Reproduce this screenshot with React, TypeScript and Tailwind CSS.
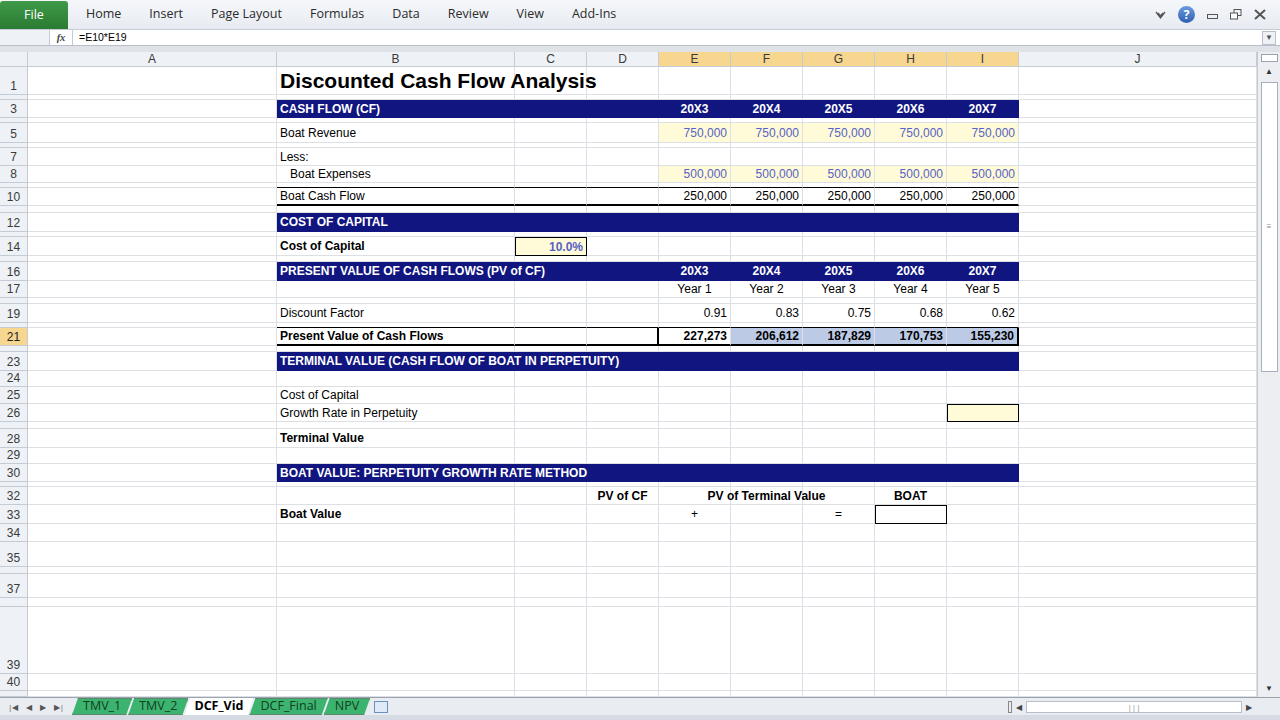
import React from "react";
import { twMerge } from "tailwind-merge";

type Cell = { t?: string; c?: string };
const W = ["w-[249px]", "w-[238px]", "w-[72px]", "w-[72px]", "w-[72px]", "w-[72px]", "w-[72px]", "w-[72px]", "w-[72px]", "w-[238px]"];
const COLS = ["A", "B", "C", "D", "E", "F", "G", "H", "I", "J"];
const NAVY = "bg-[#111580] border-[#111580] text-white font-bold";
const YEL = "bg-[#fffbd9] text-[#5561c4] justify-end";
const R = "justify-end";
const CEN = "justify-center";

type RowDef = { n: number; h: string; label?: boolean; cells?: Record<number, Cell>; sel?: boolean };

const navyRow = (title: string, years = true): Record<number, Cell> => {
  const o: Record<number, Cell> = { 1: { t: title, c: NAVY + " relative z-10" } };
  [2, 3].forEach((i) => (o[i] = { c: NAVY }));
  ["20X3", "20X4", "20X5", "20X6", "20X7"].forEach((y, k) => (o[4 + k] = { t: years ? y : "", c: NAVY + " " + CEN }));
  return o;
};
const vals = (v: string[], c: string) => {
  const o: Record<number, Cell> = {};
  v.forEach((x, k) => (o[4 + k] = { t: x, c }));
  return o;
};
const blackBottom = (): Record<number, Cell> => {
  const o: Record<number, Cell> = {};
  for (let i = 1; i <= 8; i++) o[i] = { c: "border-b-black" };
  return o;
};

const rows: RowDef[] = [
  { n: 1, h: "h-[28px]", label: true, cells: { 1: { t: "Discounted Cash Flow Analysis", c: "text-[21px] leading-[24px] font-bold relative z-10" } } },
  { n: 2, h: "h-[5px]" },
  { n: 3, h: "h-[18px]", label: true, cells: navyRow("CASH FLOW (CF)") },
  { n: 4, h: "h-[5px]" },
  { n: 5, h: "h-[20px]", label: true, cells: { 1: { t: "Boat Revenue" }, ...vals(Array(5).fill("750,000"), YEL) } },
  { n: 6, h: "h-[5px]" },
  { n: 7, h: "h-[18px]", label: true, cells: { 1: { t: "Less:" } } },
  { n: 8, h: "h-[17px]", label: true, cells: { 1: { t: "Boat Expenses", c: "pl-[13px]" }, ...vals(Array(5).fill("500,000"), YEL) } },
  { n: 9, h: "h-[5px]", cells: blackBottom() },
  { n: 10, h: "h-[18px]", label: true, cells: (() => { const o = blackBottom(); for (let i = 1; i <= 8; i++) o[i] = { c: "border-b-black border-b-2" }; o[1].t = "Boat Cash Flow"; for (let i = 4; i <= 8; i++) { o[i].t = "250,000"; o[i].c += " " + R; } return o; })() },
  { n: 11, h: "h-[7px]" },
  { n: 12, h: "h-[19px]", label: true, cells: navyRow("COST OF CAPITAL", false) },
  { n: 13, h: "h-[5px]" },
  { n: 14, h: "h-[19px]", label: true, cells: { 1: { t: "Cost of Capital", c: "font-bold" }, 2: { t: "10.0%", c: "bg-[#fffbd9] text-[#5561c4] font-bold justify-end border border-black" } } },
  { n: 15, h: "h-[6px]" },
  { n: 16, h: "h-[19px]", label: true, cells: navyRow("PRESENT VALUE OF CASH FLOWS (PV of CF)") },
  { n: 17, h: "h-[17px]", label: true, cells: vals(["Year 1", "Year 2", "Year 3", "Year 4", "Year 5"], CEN) },
  { n: 18, h: "h-[6px]" },
  { n: 19, h: "h-[19px]", label: true, cells: { 1: { t: "Discount Factor" }, ...vals(["0.91", "0.83", "0.75", "0.68", "0.62"], R) } },
  { n: 20, h: "h-[5px]", cells: blackBottom() },
  {
    n: 21, h: "h-[18px]", label: true, sel: true,
    cells: {
      1: { t: "Present Value of Cash Flows", c: "font-bold border-b-black border-b-2" },
      2: { c: "border-b-black border-b-2" },
      3: { c: "border-b-black border-b-2 border-r-black border-r-2" },
      4: { t: "227,273", c: "font-bold justify-end border-b-black border-b-2" },
      5: { t: "206,612", c: "font-bold justify-end bg-[#bccae6] border-b-black border-b-2" },
      6: { t: "187,829", c: "font-bold justify-end bg-[#bccae6] border-b-black border-b-2" },
      7: { t: "170,753", c: "font-bold justify-end bg-[#bccae6] border-b-black border-b-2" },
      8: { t: "155,230", c: "font-bold justify-end bg-[#bccae6] border-b-black border-b-2 border-r-black border-r-2" },
    },
  },
  { n: 22, h: "h-[6px]" },
  { n: 23, h: "h-[19px]", label: true, cells: navyRow("TERMINAL VALUE (CASH FLOW OF BOAT IN PERPETUITY)", false) },
  { n: 24, h: "h-[16px]", label: true },
  { n: 25, h: "h-[17px]", label: true, cells: { 1: { t: "Cost of Capital" } } },
  { n: 26, h: "h-[18px]", label: true, cells: { 1: { t: "Growth Rate in Perpetuity" }, 8: { c: "bg-[#fffbd9] border border-black" } } },
  { n: 27, h: "h-[7px]" },
  { n: 28, h: "h-[19px]", label: true, cells: { 1: { t: "Terminal Value", c: "font-bold" } } },
  { n: 29, h: "h-[16px]", label: true },
  { n: 30, h: "h-[18px]", label: true, cells: navyRow("BOAT VALUE: PERPETUITY GROWTH RATE METHOD", false) },
  { n: 31, h: "h-[5px]" },
  { n: 32, h: "h-[18px]", label: true, cells: { 3: { t: "PV of CF", c: "font-bold " + CEN }, 5: { t: "PV of Terminal Value", c: "font-bold justify-center overflow-visible" }, 7: { t: "BOAT", c: "font-bold " + CEN } } },
  { n: 33, h: "h-[19px]", label: true, cells: { 1: { t: "Boat Value", c: "font-bold" }, 4: { t: "+", c: CEN }, 6: { t: "=", c: CEN }, 7: { c: "border border-black" } } },
  { n: 34, h: "h-[18px]", label: true },
  { n: 35, h: "h-[25px]", label: true },
  { n: 36, h: "h-[7px]" },
  { n: 37, h: "h-[24px]", label: true },
  { n: 38, h: "h-[9px]" },
  { n: 39, h: "h-[67px]", label: true },
  { n: 40, h: "h-[17px]", label: true },
  { n: 41, h: "h-[6px]" },
];

function Row({ r }: { r: RowDef }) {
  return (
    <div className={`flex ${r.h} shrink-0`}>
      <div className={`w-[28px] shrink-0 ${r.sel ? "bg-[#f7d68f] text-[#222]" : "bg-[#eef1f5] text-[#3a3a3a]"} border-r border-b border-[#c5cad3] flex items-end justify-center overflow-hidden leading-[14px] text-[12px] pb-[1px]`}>
        {r.label ? r.n : ""}
      </div>
      {W.map((w, i) => {
        const cell = r.cells?.[i];
        return (
          <div key={i} className={twMerge(`${w} shrink-0 flex items-center px-[3px] whitespace-nowrap border-r border-b border-[#dcdfe3] text-[12px] leading-[14px] text-black`, cell?.c ?? "")}>
            {cell?.t}
          </div>
        );
      })}
    </div>
  );
}

export default function App() {
  const tabs = ["Home", "Insert", "Page Layout", "Formulas", "Data", "Review", "View", "Add-Ins"];
  return (
    <div className="w-[1280px] h-[720px] overflow-hidden bg-white flex flex-col" style={{ fontFamily: '"Liberation Sans", Arial, sans-serif' }}>
      <div className="h-[30px] flex items-stretch bg-gradient-to-b from-[#f5f7fa] to-[#e7ebf1] border-b border-[#c6ccd6] text-[12.5px] text-[#2b2b2b] shrink-0" style={{ fontFamily: '"Open Sans", sans-serif' }}>
        <div className="w-[68px] bg-gradient-to-b from-[#3f9a48] to-[#2a7a33] text-white flex items-center justify-center rounded-t-[3px] mt-[1px]">File</div>
        <div className="flex items-center gap-[28px] pl-[18px]">
          {tabs.map((t) => <span key={t}>{t}</span>)}
        </div>
        <div className="ml-auto flex items-center gap-[12px] pr-[14px] text-[#555]">
          <svg width="11" height="10" viewBox="0 0 11 10"><path d="M1 2 L5.5 8 L10 2 M3 3 L5.5 6 L8 3" fill="none" stroke="#555" strokeWidth="1.3" /></svg>
          <div className="w-[17px] h-[17px] rounded-full bg-gradient-to-b from-[#6d9be0] to-[#2f5fb0] text-white text-[12px] font-bold flex items-center justify-center">?</div>
          <div className="w-[11px] h-[5px] border border-[#555] mt-[4px]" />
          <svg width="12" height="11" viewBox="0 0 12 11"><rect x="4" y="0.5" width="7" height="6" fill="none" stroke="#555" /><rect x="0.5" y="4" width="7" height="6" fill="white" stroke="#555" /></svg>
          <svg width="12" height="11" viewBox="0 0 12 11"><path d="M1 1 L11 10 M11 1 L1 10" stroke="#555" strokeWidth="2" /></svg>
        </div>
      </div>
      <div className="h-[16px] flex items-center bg-white border-b border-[#b8bfca] shrink-0 text-[10.5px]">
        <div className="w-[50px] h-full bg-[#eef1f5] border-r border-[#c5cad3]" />
        <div className="w-[22px] text-center italic font-bold text-[#444]" style={{ fontFamily: '"Liberation Serif", serif' }}>fx</div>
        <div className="w-[1px] h-full bg-[#c5cad3]" />
        <div className="pl-[6px] flex-1">=E10*E19</div>
        <div className="w-[14px] h-[14px] mr-[4px] border border-[#b8bfca] bg-[#eef1f5] flex items-center justify-center text-[8px] text-[#555]">▼</div>
      </div>
      <div className="h-[6px] bg-[#dfe3e8] shrink-0" />
      <div className="flex flex-1 min-h-0">
        <div className="flex flex-col w-[1257px] overflow-hidden">
          <div className="flex h-[15px] shrink-0 text-[12px] text-[#3a3a3a]">
            <div className="w-[28px] shrink-0 bg-[#eef1f5] border-r border-b border-[#c5cad3]" />
            {COLS.map((c, i) => (
              <div key={c} className={`${W[i]} shrink-0 border-r border-b border-[#c5cad3] flex items-center justify-center leading-[14px] ${i >= 4 && i <= 8 ? "bg-[#f7d68f]" : "bg-[#eef1f5]"}`}>{c}</div>
            ))}
          </div>
          {rows.map((r) => <Row key={r.n} r={r} />)}
        </div>
        <div className="w-[23px] bg-[#eceef2] border-l border-[#c5cad3] flex flex-col items-center">
          <div className="w-[17px] h-[8px] border border-[#9aa3ae] bg-white mt-[2px]" />
          <div className="text-[8px] text-[#333] mt-[4px]">▲</div>
          <div className="w-[17px] h-[290px] bg-white border border-[#a7afba] mt-[4px] flex items-center justify-center text-[8px] text-[#888]">≡</div>
          <div className="flex-1" />
          <div className="text-[8px] text-[#333] mb-[2px]">▼</div>
        </div>
      </div>
      <div className="h-[18px] shrink-0 flex items-stretch bg-[#e9ecf1] border-t border-[#9aa3ae] text-[12.5px]" style={{ fontFamily: '"Open Sans", sans-serif' }}>
        <div className="w-[72px] flex items-center justify-around text-[8px] text-[#555] px-[4px]">
          <span>|◀</span><span>◀</span><span>▶</span><span>▶|</span>
        </div>
        {["TMV_1", "TMV_2", "DCF_Vid", "DCF_Final", "NPV"].map((t) => (
          <div key={t} className={`px-[10px] flex items-center -mr-[4px] ${t === "DCF_Vid" ? "bg-white font-bold text-black z-10" : "bg-[#3cb470] text-[#104020] border border-[#5b8a6c]"}`} style={{ clipPath: "polygon(6px 0, 100% 0, calc(100% - 6px) 100%, 0 100%)" }}>{t}</div>
        ))}
        <div className="ml-[8px] w-[14px] h-[12px] mt-[3px] border border-[#6b8fbf] bg-[#dfe9f7]" />
        <div className="ml-auto w-[272px] flex items-center gap-[4px] pr-[28px] text-[8px] text-[#444]">
          <span className="w-[4px] h-[12px] border border-[#888]" />
          <span>◀</span>
          <div className="flex-1 h-[12px] bg-white border border-[#b8bfca] flex justify-center items-center text-[#888]">|||</div>
          <span>▶</span>
        </div>
      </div>
      <div className="h-[5px] bg-[#d6dbe3] shrink-0" />
    </div>
  );
}
